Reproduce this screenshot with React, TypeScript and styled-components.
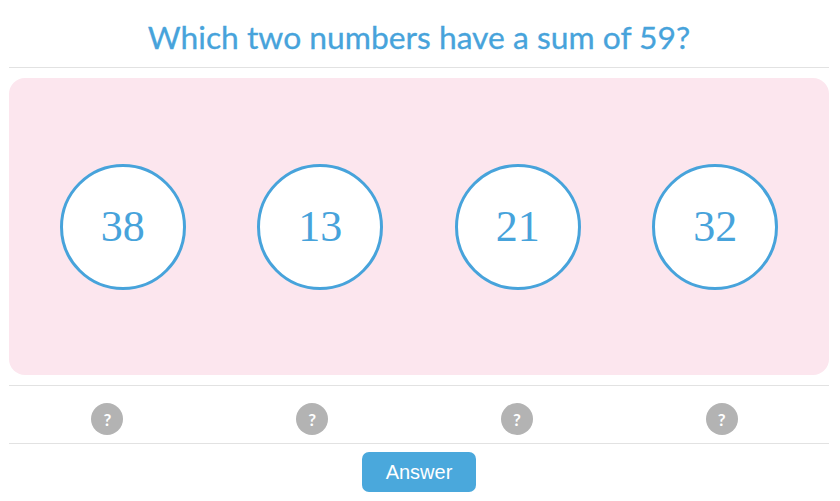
import styled, { createGlobalStyle } from 'styled-components';

const GlobalStyle = createGlobalStyle`
  html, body {
    margin: 0;
    padding: 0;
    background: #ffffff;
  }
`;

const Page = styled.div`
  width: 820px;
  margin-left: 9px;
  font-family: Lato, "Liberation Sans", sans-serif;
`;

const Header = styled.div`
  height: 67px;
  border-bottom: 1px solid #e2e2e2;
  display: flex;
  align-items: center;
  justify-content: center;
`;

const Title = styled.h1`
  margin: 0;
  font-size: 31.8px;
  font-weight: 400;
  color: #47a3db;
  padding-top: 6px;
  -webkit-text-stroke: 0.3px #47a3db;
`;

const Board = styled.div`
  margin-top: 10px;
  height: 297px;
  background: #fce6ee;
  border-radius: 16px;
  padding: 0 15px;
  display: grid;
  grid-template-columns: repeat(4, 1fr);
  align-items: center;
  justify-items: center;
`;

const Ball = styled.div`
  width: 120px;
  height: 120px;
  border-radius: 50%;
  border: 3px solid #47a3db;
  background: #ffffff;
  display: flex;
  align-items: center;
  justify-content: center;
  font-family: "Liberation Serif", serif;
  font-size: 44px;
  color: #47a3db;
`;

const Slots = styled.div`
  margin-top: 10px;
  border-top: 1px solid #e2e2e2;
  border-bottom: 1px solid #e2e2e2;
`;

const SlotGrid = styled.div`
  display: grid;
  grid-template-columns: repeat(4, 1fr);
  justify-items: center;
  margin: 0 5px 0 -4px;
  padding: 17px 0 8px;
`;

const Mark = styled.div`
  width: 32px;
  height: 32px;
  border-radius: 50%;
  background: #b3b3b3;
  color: #ffffff;
  display: flex;
  align-items: center;
  justify-content: center;
  font-family: Lato, sans-serif;
  font-weight: 700;
  font-size: 17px;
`;

const Footer = styled.div`
  display: flex;
  justify-content: center;
  padding-top: 8px;
`;

const AnswerButton = styled.button`
  width: 114px;
  height: 40px;
  border: none;
  border-radius: 7px;
  background: #4aa8dc;
  color: #ffffff;
  font-family: "Liberation Sans", Arial, sans-serif;
  font-size: 20px;
  cursor: pointer;
`;

const numbers = [38, 13, 21, 32];

const App = () => {
  return (
    <Page>
      <GlobalStyle />
      <Header>
        <Title>Which two numbers have a sum of 59?</Title>
      </Header>
      <Board>
        {numbers.map((n) => (
          <Ball key={n}>{n}</Ball>
        ))}
      </Board>
      <Slots>
        <SlotGrid>
          {numbers.map((n) => (
            <Mark key={n}>?</Mark>
          ))}
        </SlotGrid>
      </Slots>
      <Footer>
        <AnswerButton>Answer</AnswerButton>
      </Footer>
    </Page>
  );
};

export default App;
